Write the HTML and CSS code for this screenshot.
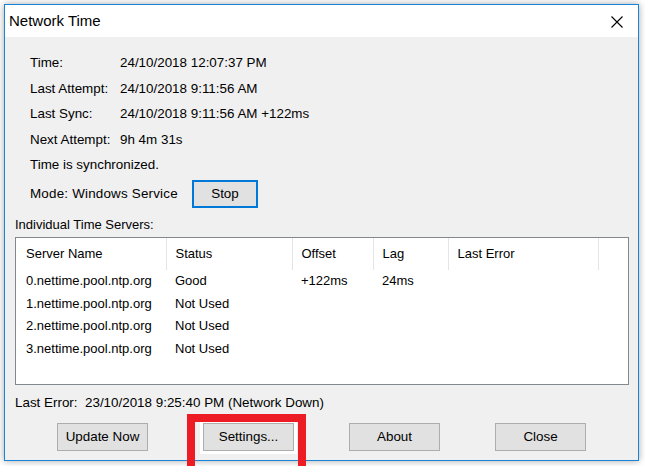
FILE: index.html
```html
<!DOCTYPE html>
<html lang="en">
<head>
  <meta charset="UTF-8" />
  <meta name="viewport" content="width=device-width, initial-scale=1.0" />
  <title>Network Time</title>
  <link rel="stylesheet" href="styles.css">
</head>
<body>
  <div class="window">
    <div class="title-bar">
      <span class="title">Network Time</span>
      <span class="close">
        <svg width="12" height="12" viewBox="0 0 12 12"><path d="M0.5 0.5 L11.5 11.5 M11.5 0.5 L0.5 11.5" stroke="#000" stroke-width="1.1" fill="none"/></svg>
      </span>
    </div>

    <div class="content">
      <div class="info">
        <div class="row"><span class="label">Time:</span><span>24/10/2018 12:07:37 PM</span></div>
        <div class="row"><span class="label">Last Attempt:</span><span>24/10/2018 9:11:56 AM</span></div>
        <div class="row"><span class="label">Last Sync:</span><span>24/10/2018 9:11:56 AM +122ms</span></div>
        <div class="row"><span class="label">Next Attempt:</span><span>9h 4m 31s</span></div>
        <div class="row">Time is synchronized.</div>
        <div class="mode">
          <span class="mode-text">Mode: Windows Service</span>
          <button class="btn btn-stop">Stop</button>
        </div>
      </div>

      <div class="group-label">Individual Time Servers:</div>

      <div class="list">
        <table>
          <colgroup>
            <col style="width:150px">
            <col style="width:126px">
            <col style="width:81px">
            <col style="width:75px">
            <col style="width:150px">
            <col>
          </colgroup>
          <thead>
            <tr>
              <th>Server Name</th>
              <th>Status</th>
              <th>Offset</th>
              <th>Lag</th>
              <th>Last Error</th>
              <th class="filler"></th>
            </tr>
          </thead>
          <tbody>
            <tr><td>0.nettime.pool.ntp.org</td><td>Good</td><td>+122ms</td><td>24ms</td><td></td><td></td></tr>
            <tr><td>1.nettime.pool.ntp.org</td><td>Not Used</td><td></td><td></td><td></td><td></td></tr>
            <tr><td>2.nettime.pool.ntp.org</td><td>Not Used</td><td></td><td></td><td></td><td></td></tr>
            <tr><td>3.nettime.pool.ntp.org</td><td>Not Used</td><td></td><td></td><td></td><td></td></tr>
          </tbody>
        </table>
      </div>

      <div class="last-error"><span class="le-label">Last Error:</span><span>23/10/2018 9:25:40 PM (Network Down)</span></div>

      <div class="actions">
        <button class="btn">Update Now</button>
        <button class="btn btn-marked">Settings...</button>
        <button class="btn">About</button>
        <button class="btn">Close</button>
      </div>
    </div>
  </div>

  <div class="highlight"></div>
</body>
</html>
```

FILE: styles.css
```css
* { box-sizing: border-box; }

body {
  margin: 0;
  background: #ffffff;
  font-family: 'Liberation Sans', Arial, sans-serif;
  color: #000000;
  width: 645px;
  height: 466px;
  overflow: hidden;
  position: relative;
}

.window {
  margin: 4px 0 0 4px;
  width: 635px;
  height: 457px;
  border: 1px solid #1883d7;
  background: #f0f0f0;
  box-shadow: 0 0 7px rgba(0, 0, 0, 0.35);
}

.title-bar {
  height: 32px;
  background: #ffffff;
  display: flex;
  align-items: center;
  justify-content: space-between;
  padding: 0 15px 0 4px;
}

.title {
  font-size: 15px;
  margin-top: -1px;
}

.close {
  display: flex;
  margin-top: 1px;
}

.content {
  padding: 13px 9px 0 10px;
}

.info {
  padding-left: 15px;
  font-size: 13.4px;
}

.row {
  display: flex;
  height: 25.5px;
  align-items: center;
}

.label {
  width: 90px;
}

.mode {
  display: flex;
  align-items: center;
  margin-top: 2px;
}

.mode-text {
  width: 162px;
  letter-spacing: 0.2px;
}

.btn {
  width: 91px;
  height: 28px;
  background: #e1e1e1;
  border: 1px solid #adadad;
  font-family: 'Liberation Sans', Arial, sans-serif;
  font-size: 13.4px;
  color: #000000;
  padding: 0;
}

.btn-stop {
  width: 66px;
  border: 2px solid #0078d7;
}

.btn-marked {
  box-shadow: 0 0 0 3px #ffffff;
}

.group-label {
  font-size: 13px;
  line-height: 16px;
  margin-top: 9px;
}

.list {
  margin-top: 4px;
  height: 148px;
  border: 1px solid #828790;
  background: #ffffff;
}

table {
  border-collapse: collapse;
  width: 100%;
  table-layout: fixed;
  font-size: 13px;
}

th {
  font-weight: normal;
  text-align: left;
  height: 32px;
  padding: 0 0 0 9px;
  border-right: 1px solid #e5e5e5;
}

th:first-child, td:first-child {
  padding-left: 10px;
}

th.filler {
  border-right: none;
}

td {
  height: 22.5px;
  padding: 0 0 0 9px;
  white-space: nowrap;
}

.last-error {
  font-size: 13.4px;
  line-height: 16px;
  margin-top: 10px;
  display: flex;
}

.le-label {
  width: 70px;
}

.actions {
  display: flex;
  gap: 55px;
  padding-left: 42px;
  margin-top: 12px;
}

.highlight {
  position: absolute;
  left: 187px;
  top: 414px;
  width: 119px;
  height: 60px;
  border: 8px solid #ed1c24;
}
```
